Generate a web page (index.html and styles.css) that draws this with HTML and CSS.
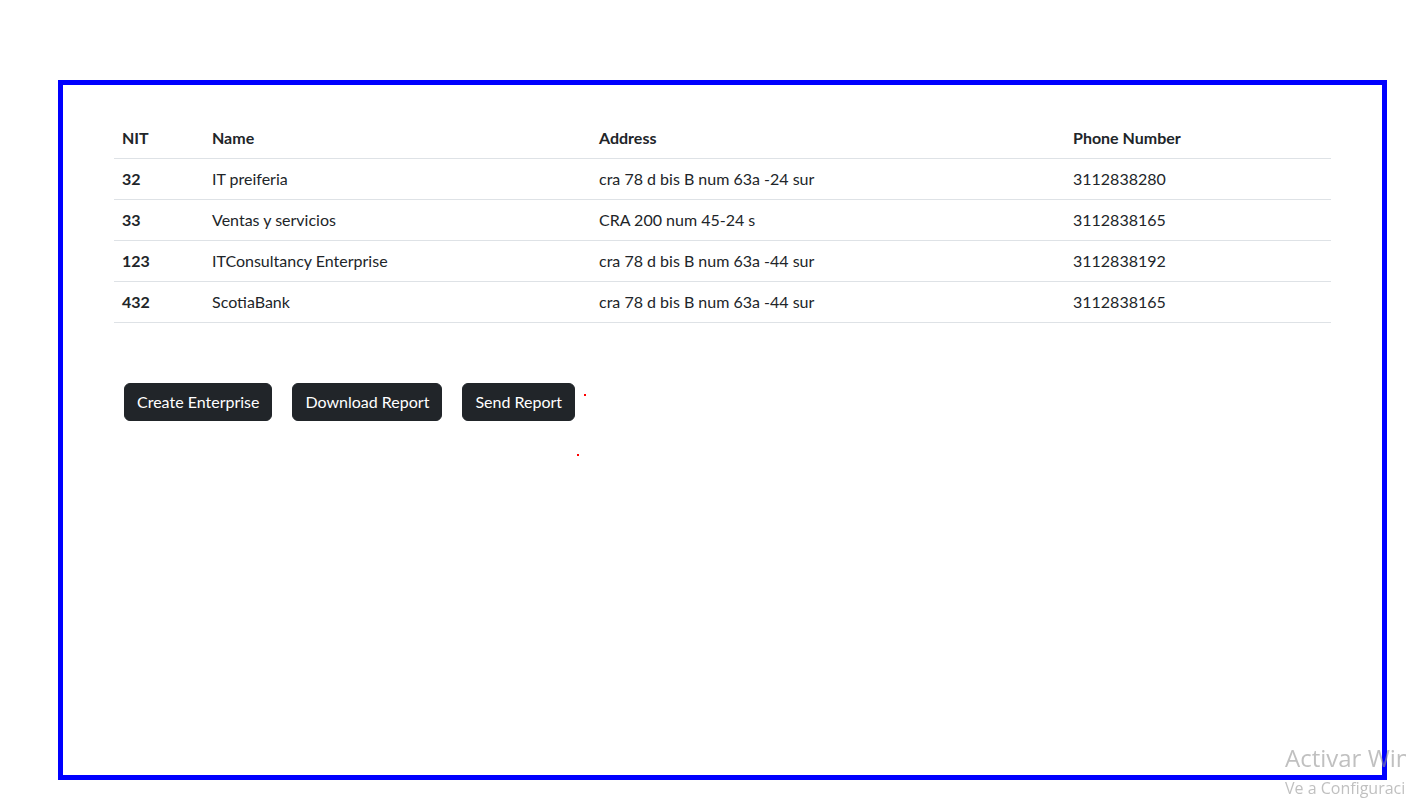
FILE: index.html
```html
<!DOCTYPE html>
<html lang="es">
<head>
<meta charset="utf-8">
<title>Enterprises</title>
<link rel="stylesheet" href="styles.css">
</head>
<body>
<div class="frame">
  <table class="table">
    <colgroup>
      <col class="c-nit"><col class="c-name"><col class="c-addr"><col class="c-phone">
    </colgroup>
    <thead>
      <tr><th>NIT</th><th>Name</th><th>Address</th><th>Phone Number</th></tr>
    </thead>
    <tbody>
      <tr><th>32</th><td>IT preiferia</td><td>cra 78 d bis B num 63a -24 sur</td><td>3112838280</td></tr>
      <tr><th>33</th><td>Ventas y servicios</td><td>CRA 200 num 45-24 s</td><td>3112838165</td></tr>
      <tr><th>123</th><td>ITConsultancy Enterprise</td><td>cra 78 d bis B num 63a -44 sur</td><td>3112838192</td></tr>
      <tr><th>432</th><td>ScotiaBank</td><td>cra 78 d bis B num 63a -44 sur</td><td>3112838165</td></tr>
    </tbody>
  </table>
  <div class="actions">
    <button class="btn">Create Enterprise</button>
    <button class="btn">Download Report</button>
    <button class="btn">Send Report</button>
    <span class="dot dot-a"></span>
    <span class="dot dot-b"></span>
  </div>
</div>
<div class="watermark">
  <div class="wm-title">Activar Windows</div>
  <div class="wm-sub">Ve a Configuración para activar Windows.</div>
</div>
</body>
</html>
```
FILE: styles.css
```css
html, body {
  margin: 0;
  padding: 0;
  overflow: hidden;
  background: #fff;
}
body {
  font-family: "Lato", "Open Sans", "Liberation Sans", sans-serif;
  font-size: 16px;
  line-height: 1.5;
  color: #212529;
  width: 1406px;
  height: 811px;
}
.frame {
  box-sizing: border-box;
  margin: 80px 0 0 58px;
  width: 1329px;
  height: 700px;
  border: 5px solid #0000ff;
  padding: 33px 51px 0;
}
.table {
  width: 100%;
  border-collapse: collapse;
  margin-bottom: 16px;
}
.c-nit { width: 90px; }
.c-name { width: 387px; }
.c-addr { width: 474px; }
.c-phone { width: 266px; }
.table th, .table td {
  padding: 8px;
  text-align: left;
  border-bottom: 1px solid #dee2e6;
  vertical-align: top;
}
.table th { font-weight: 700; }
.table td { font-weight: 400; }
.actions {
  position: relative;
  display: flex;
  gap: 20px;
  margin: 60px 0 0 10px;
}
.btn {
  font-family: inherit;
  font-size: 16px;
  line-height: 24px;
  color: #fff;
  background: #212529;
  border: 1px solid #212529;
  border-radius: 6px;
  padding: 6px 12px;
}
.dot {
  position: absolute;
  width: 2px;
  height: 2px;
  background: #ff0000;
}
.dot-a { left: 460px; top: 11px; }
.dot-b { left: 453px; top: 71px; }
.watermark {
  position: fixed;
  left: 1285px;
  top: 742px;
  white-space: nowrap;
  color: rgba(150, 150, 150, 0.6);
  font-family: "Open Sans", "Liberation Sans", sans-serif;
}
.wm-title { font-size: 24px; line-height: 32px; }
.wm-sub { font-size: 16px; line-height: 24px; margin-top: 2px; }
```
